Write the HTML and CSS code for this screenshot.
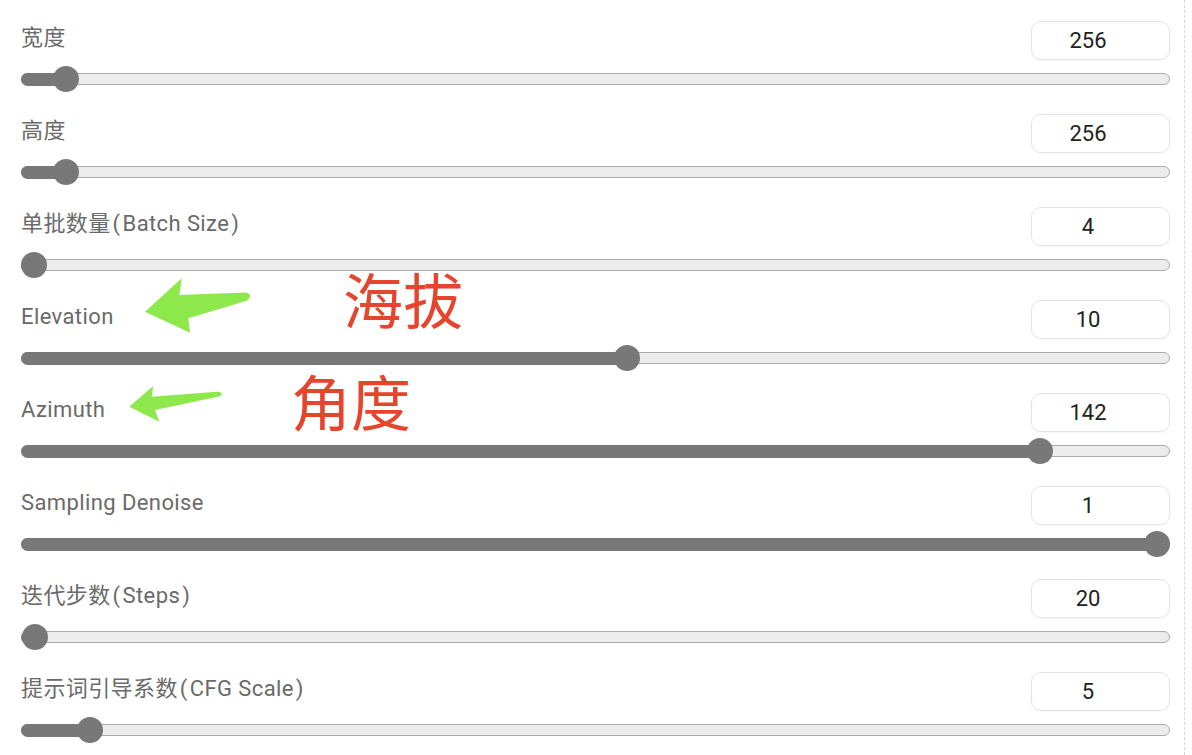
FILE: index.html
```html
<!DOCTYPE html>
<html lang="zh-CN">
<head>
<meta charset="utf-8">
<title>Sliders</title>
<link rel="stylesheet" href="styles.css">
</head>
<body>
<div class="page">
  <div class="panel">
    <div class="row">
      <div class="head"><span class="label">宽度</span><div class="num">256</div></div>
      <div class="slider" style="--p:0.0285"><div class="track"></div><div class="fill"></div><div class="thumb"></div></div>
    </div>
    <div class="row">
      <div class="head"><span class="label">高度</span><div class="num">256</div></div>
      <div class="slider" style="--p:0.0285"><div class="track"></div><div class="fill"></div><div class="thumb"></div></div>
    </div>
    <div class="row">
      <div class="head"><span class="label">单批数量<span class="paren">(</span>Batch Size<span class="paren">)</span></span><div class="num">4</div></div>
      <div class="slider" style="--p:0"><div class="track"></div><div class="fill"></div><div class="thumb"></div></div>
    </div>
    <div class="row">
      <div class="head"><span class="label">Elevation</span><div class="num">10</div></div>
      <div class="slider" style="--p:0.528"><div class="track"></div><div class="fill"></div><div class="thumb"></div></div>
    </div>
    <div class="row">
      <div class="head"><span class="label">Azimuth</span><div class="num">142</div></div>
      <div class="slider" style="--p:0.8958"><div class="track"></div><div class="fill"></div><div class="thumb"></div></div>
    </div>
    <div class="row">
      <div class="head"><span class="label">Sampling Denoise</span><div class="num">1</div></div>
      <div class="slider" style="--p:1"><div class="track"></div><div class="fill"></div><div class="thumb"></div></div>
    </div>
    <div class="row">
      <div class="head"><span class="label">迭代步数<span class="paren">(</span>Steps<span class="paren">)</span></span><div class="num">20</div></div>
      <div class="slider" style="--p:0.001"><div class="track"></div><div class="fill"></div><div class="thumb"></div></div>
    </div>
    <div class="row">
      <div class="head"><span class="label">提示词引导系数<span class="paren">(</span>CFG Scale<span class="paren">)</span></span><div class="num">5</div></div>
      <div class="slider" style="--p:0.05"><div class="track"></div><div class="fill"></div><div class="thumb"></div></div>
    </div>
  </div>
  <div class="divider"></div>
</div>

<div class="annot">
  <svg class="arrows" width="1192" height="755" viewBox="0 0 1192 755">
    <path d="M145,311.7 L181.7,278.3 L179.3,295 L245,292.5 Q251,293 250,297 Q249,300 246.7,300.7 L188.3,318.3 L190,332.7 Z" fill="#8de84b"/>
    <path d="M129.3,406.7 L153.3,386 L151.7,396.7 L216.7,391.7 Q222,392 221.7,394.5 Q221,396.5 216.7,396.9 L155,410 L159.3,421.7 Z" fill="#8de84b"/>
  </svg>
  <span class="note note-elev">海拔</span>
  <span class="note note-azim">角度</span>
</div>
</body>
</html>
```

FILE: styles.css
```css
html, body {
  margin: 0;
  padding: 0;
  background: #ffffff;
}

body {
  width: 1192px;
  height: 755px;
  overflow: hidden;
  position: relative;
  font-family: Roboto, "Noto Sans CJK SC", sans-serif;
}

.page {
  display: flex;
  height: 100%;
  padding: 20px 0 0 21px;
  box-sizing: border-box;
}

.panel {
  width: 1149px;
  display: flex;
  flex-direction: column;
}

.divider {
  margin-left: 14px;
  border-left: 1px dashed #d6d6d6;
  margin-top: -20px;
  height: 755px;
}

.row {
  margin-bottom: 21px;
}

.head {
  display: flex;
  justify-content: space-between;
  align-items: center;
  height: 40px;
}

.label {
  font-size: 22px;
  letter-spacing: 0.4px;
  color: #6a6a6a;
  line-height: 1;
  margin-top: -4px;
}

.paren {
  padding: 0 2px;
}

.num {
  width: 139px;
  height: 39px;
  box-sizing: border-box;
  border: 1px solid #e4e4e4;
  border-radius: 10px;
  box-shadow: 0 1px 2px rgba(0, 0, 0, 0.04);
  display: flex;
  align-items: center;
  justify-content: center;
  padding-right: 25px;
  font-size: 22px;
  color: #222;
}

.slider {
  position: relative;
  margin-top: 6px;
  height: 26px;
  padding-top: 7px;
  box-sizing: border-box;
}

.track {
  height: 12px;
  box-sizing: border-box;
  border: 1.5px solid #ababab;
  border-radius: 6px;
  background: #ececec;
}

.fill {
  position: absolute;
  left: 0;
  top: 6.5px;
  height: 13px;
  width: calc(var(--p) * (100% - 26px) + 13px);
  background: #787878;
  border-radius: 6.5px;
}

.thumb {
  position: absolute;
  top: 0;
  left: calc(var(--p) * (100% - 26px));
  width: 26px;
  height: 26px;
  border-radius: 50%;
  background: #787878;
}

.annot {
  position: absolute;
  left: 0;
  top: 0;
  width: 1192px;
  height: 755px;
  pointer-events: none;
}

.arrows {
  position: absolute;
  left: 0;
  top: 0;
}

.note {
  position: absolute;
  font-family: "Noto Sans CJK SC", sans-serif;
  font-size: 60px;
  line-height: 1;
  color: #e5452c;
}

.note-elev {
  left: 343px;
  top: 268px;
}

.note-azim {
  left: 291px;
  top: 370px;
}
```
